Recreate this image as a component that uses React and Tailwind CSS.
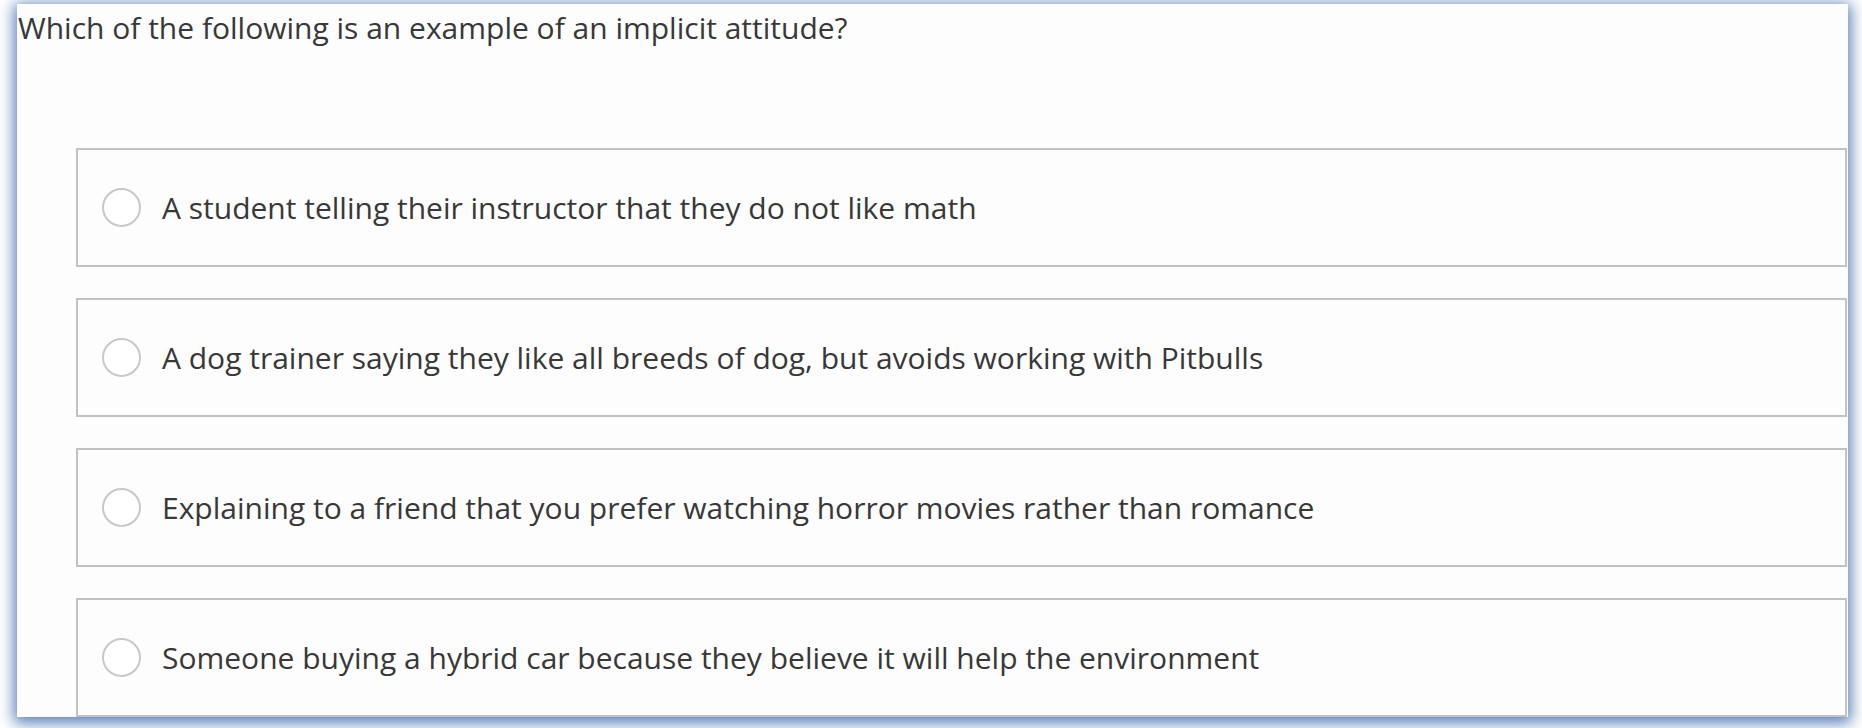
import React from 'react';

const options = [
  'A student telling their instructor that they do not like math',
  'A dog trainer saying they like all breeds of dog, but avoids working with Pitbulls',
  'Explaining to a friend that you prefer watching horror movies rather than romance',
  'Someone buying a hybrid car because they believe it will help the environment',
];

const OptionRow = ({ label }) => {
  return (
    <label className="flex items-center h-[119px] border-2 border-[#c2c2c2] bg-[#fdfdfd] pl-[24px] cursor-pointer">
      <span className="w-[39px] h-[39px] rounded-full border-2 border-[#c8c8c8] bg-white shrink-0"></span>
      <span className="ml-[21px] text-[30px] text-[#383838] leading-none">{label}</span>
    </label>
  );
};

const App = () => {
  return (
    <div
      className="w-[1862px] h-[728px] bg-white pt-[4px] pl-[17px] pr-[14px] overflow-hidden"
      style={{ fontFamily: '"Open Sans", "Liberation Sans", sans-serif' }}
    >
      <div className="h-[713px] bg-[#fdfdfd] overflow-hidden shadow-[0_3px_14px_3px_rgba(80,120,180,0.95)]">
        <h1 className="pl-[1px] pt-[5px] text-[30px] text-[#383838] leading-[38px]">
          Which of the following is an example of an implicit attitude?
        </h1>
        <div className="flex flex-col gap-[31px] mt-[101px] ml-[59px] mr-[1px]">
          {options.map(opt => (
            <OptionRow key={opt} label={opt} />
          ))}
        </div>
      </div>
    </div>
  );
};

export default App;
